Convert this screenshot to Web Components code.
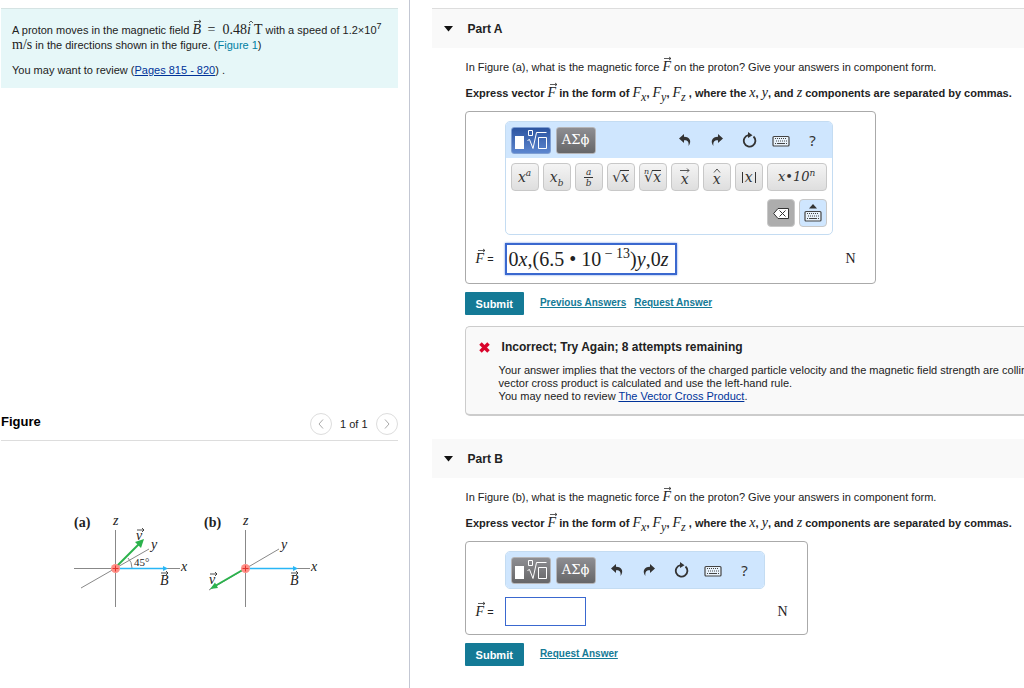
<!DOCTYPE html>
<html lang="en">
<head>
<meta charset="utf-8">
<title>Magnetic force on a proton</title>
<style>
  body {
    margin: 0;
    background: #fff;
    color: #222;
    font: 11px/14px "Liberation Sans", Arial, sans-serif;
    overflow-x: hidden;
  }
  p { margin: 0; }
  a { color: #003399; text-decoration: underline; }
  a.plain { color: #007fa3; text-decoration: none; }
  answer-actions a { color: #147a96; font-weight: bold; font-size: 10px; }
  i, .tex { font-family: "Liberation Serif", "Times New Roman", serif; font-weight: normal; font-size: 14px; line-height: 1; }
  p sup { font-size: 9px; line-height: 0; }
</style>
</head>
<body>
<tutorial-page>
  <problem-intro slot="problem">
    <p>A proton moves in the magnetic field <math-vec>B</math-vec> <span class="tex">&nbsp;=&nbsp; 0.48</span><math-vec accent="hat">i</math-vec> <span class="tex">T</span> with a speed of 1.2×10<sup>7</sup> <span class="tex">m/s</span> in the directions shown in the figure. (<a class="plain" href="#figure">Figure 1</a>)</p>
    <p>You may want to review (<a href="#pages">Pages 815 - 820</a>) .</p>
  </problem-intro>
  <figure-viewer slot="figure" id="figure">
    <proton-diagram></proton-diagram>
  </figure-viewer>

  <part-section heading="Part A">
    <p>In Figure (a), what is the magnetic force <math-vec>F</math-vec> on the proton? Give your answers in component form.</p>
    <p><b>Express vector <math-vec>F</math-vec> in the form of <math-sub sub="x">F</math-sub>, <math-sub sub="y">F</math-sub>, <math-sub sub="z">F</math-sub> , where the <i>x</i>, <i>y</i>, and <i>z</i> components are separated by commas.</b></p>
    <answer-box slot="answer" unit="N" expanded>
      <answer-value>0<em>x</em>,(6.5 • 10<sup>&nbsp;− 13</sup>)<em>y</em>,0<em>z</em></answer-value>
    </answer-box>
    <answer-actions slot="answer">
      <a href="#previous">Previous Answers</a>
      <a href="#request">Request Answer</a>
    </answer-actions>
    <answer-feedback slot="answer" heading="Incorrect; Try Again; 8 attempts remaining">
      Your answer implies that the vectors of the charged particle velocity and the magnetic field strength are collinear<br>
      vector cross product is calculated and use the left-hand rule.<br>
      You may need to review <a href="#cross">The Vector Cross Product</a>.
    </answer-feedback>
  </part-section>

  <part-section heading="Part B">
    <p>In Figure (b), what is the magnetic force <math-vec>F</math-vec> on the proton? Give your answers in component form.</p>
    <p><b>Express vector <math-vec>F</math-vec> in the form of <math-sub sub="x">F</math-sub>, <math-sub sub="y">F</math-sub>, <math-sub sub="z">F</math-sub> , where the <i>x</i>, <i>y</i>, and <i>z</i> components are separated by commas.</b></p>
    <answer-box slot="answer" unit="N"></answer-box>
    <answer-actions slot="answer">
      <a href="#request">Request Answer</a>
    </answer-actions>
  </part-section>
</tutorial-page>

<script>
const SERIF = `"Liberation Serif", "Times New Roman", serif`;

const ICONS = {
  undo: `<svg width="14" height="14" viewBox="0 0 14 14"><path fill="#333" d="M6 1 1 5.5 6 10V7.2C9.5 7 11 8.5 10.6 13 14 8.5 12 3.8 6 3.8Z"/></svg>`,
  redo: `<svg width="14" height="14" viewBox="0 0 14 14"><path fill="#333" d="M8 1 13 5.5 8 10V7.2C4.500 7 3 8.500 3.400 13 0 8.500 2 3.800 8 3.800Z"/></svg>`,
  reset: `<svg width="16" height="16" viewBox="0 0 16 16"><path fill="none" stroke="#333" stroke-width="1.800" d="M12.500 4.500A5.800 5.800 0 1 1 7.500 3.100"/><path fill="#333" d="M7 0 11.500 3.200 7 6Z"/></svg>`,
  keyboard: `<svg width="18" height="14" viewBox="0 0 18 14"><rect x="1" y="3.500" width="16" height="9.500" rx="1" fill="#e8f2fb" stroke="#444" stroke-width="1.200"/><path fill="none" stroke="#444" stroke-dasharray="1 1" d="M3 5.500h12M4 8h11"/><path stroke="#444" d="M3 10.500h1M5 10.500h8M14 10.500h1"/></svg>`,
  collapse: `<svg width="18" height="18" viewBox="0 0 18 18"><path fill="#333" d="M9 0 13 4.500H5Z"/><rect x="1" y="7.500" width="16" height="9.500" rx="1" fill="#e8f2fb" stroke="#444" stroke-width="1.200"/><path fill="none" stroke="#444" stroke-dasharray="1 1" d="M3 9.500h12M4 12h11"/><path stroke="#444" d="M3 14.500h1M5 14.500h8M14 14.500h1"/></svg>`,
  erase: `<svg width="16" height="11" viewBox="0 0 16 11"><path fill="#fff" stroke="#333" d="M5 .5H15.500V10.500H5L.7 5.500Z"/><path stroke="#333" d="M6.500 2.500 12.500 8.500M12.500 2.500 6.500 8.500"/></svg>`,
  template: `<svg width="32" height="22" viewBox="0 0 32 22"><rect x="0" y="7" width="9" height="13" fill="#fff"/><path fill="none" stroke="#fff" d="M13.500 1.500h4v5h-4zM12.500 11.500l2-1 3.500 9 3.500-16h10M23.500 8.500h8v11h-8z"/></svg>`,
};

/**
 * Base: opens the shadow root and stamps the html getter into it.
 */
class BaseElement extends HTMLElement {
  constructor() {
    super();
    this.attachShadow({ mode: "open" });
  }
  connectedCallback() {
    this.render();
  }
  render() {
    const template = document.createElement("template");
    template.innerHTML = this.html;
    this.shadowRoot.replaceChildren(template.content.cloneNode(true));
  }
}

/**
 * `tutorial-page`
 * Problem and figure on the left, parts on the right.
 */
class TutorialPage extends BaseElement {
  static get tag() {
    return "tutorial-page";
  }
  get html() {
    return `
    <style>
      :host {
        display: grid;
        grid-template-columns: 2fr 3fr;
        min-height: 100vh;
      }
      aside {
        display: grid;
        grid-template-rows: 3fr 2fr;
        box-sizing: border-box;
        height: 100vh;
        min-width: 0;
        padding: 0 11px 0 1px;
        border-right: 1px solid #c3c7d3;
      }
      main {
        display: flex;
        flex-direction: column;
        gap: 23px;
        min-width: 0;
        padding: 8px 0 0 22px;
      }
    </style>
    <aside>
      <slot name="problem"></slot>
      <slot name="figure"></slot>
    </aside>
    <main><slot></slot></main>`;
  }
}

/**
 * `math-vec`
 * Italic symbol with an arrow or a hat above it.
 */
class MathVec extends BaseElement {
  static get tag() {
    return "math-vec";
  }
  get html() {
    const mark =
      this.getAttribute("accent") === "hat"
        ? "M1 4 3 2 5 4"
        : "M1 2.500H8M6 1 8 2.500 6 4";
    return `
    <style>
      :host {
        display: inline-block;
        position: relative;
        font: italic 14px/14px ${SERIF};
      }
      svg { position: absolute; top: -4px; left: 1px; }
    </style>
    <slot></slot><svg width="9" height="6" viewBox="0 0 9 6" aria-hidden="true"><path d="${mark}" fill="none" stroke="#333" stroke-width=".8"/></svg>`;
  }
}

/**
 * `math-sub`
 * Italic symbol with a subscript.
 */
class MathSub extends BaseElement {
  static get tag() {
    return "math-sub";
  }
  get html() {
    return `
    <style>
      :host { font: italic 14px/1 ${SERIF}; }
      sub { font-size: 12px; line-height: 0; }
    </style><slot></slot><sub>${this.getAttribute("sub")}</sub>`;
  }
}

class ProblemIntro extends BaseElement {
  static get tag() {
    return "problem-intro";
  }
  get html() {
    return `
    <style>
      :host { display: block; min-width: 0; padding-top: 8px; }
      section {
        display: flex;
        flex-direction: column;
        gap: 10px;
        padding: 14px 11px 10px;
        border-top: 1px solid #d5e3e3;
        background: #e6f7f8;
        line-height: 15px;
      }
    </style>
    <section><slot></slot></section>`;
  }
}

/**
 * `figure-viewer`
 * Title bar with pager, figure below.
 */
class FigureViewer extends BaseElement {
  static get tag() {
    return "figure-viewer";
  }
  get html() {
    return `
    <style>
      :host { display: block; min-width: 0; }
      header {
        display: flex;
        align-items: center;
        gap: 8px;
        padding-bottom: 5px;
        border-bottom: 1px solid #ddd;
      }
      h2 { flex: 1; align-self: start; margin: 0; color: #000; font-size: 13px; line-height: 18px; }
      button {
        display: grid;
        place-items: center;
        width: 22px;
        height: 22px;
        padding: 0;
        border: 1px solid #ddd;
        border-radius: 50%;
        background: #fff;
      }
      .body { padding: 72px 0 0 71px; }
    </style>
    <header>
      <h2>Figure</h2>
      <button type="button" aria-label="Previous figure"><svg width="8" height="12" viewBox="0 0 8 12"><path d="M6 1.500 2 6l4 4.500" fill="none" stroke="#aaa"/></svg></button>
      <span>1 of 1</span>
      <button type="button" aria-label="Next figure"><svg width="8" height="12" viewBox="0 0 8 12"><path d="M2 1.500 6 6l-4 4.500" fill="none" stroke="#aaa"/></svg></button>
    </header>
    <div class="body"><slot></slot></div>`;
  }
}

/**
 * `proton-diagram`
 * Axes, field and velocity vectors for cases (a) and (b).
 */
class ProtonDiagram extends BaseElement {
  static get tag() {
    return "proton-diagram";
  }
  proton(x, y) {
    return `
      <circle cx="${x}" cy="${y}" r="4.500" fill="#ff8f87"/>
      <path d="M${x - 3} ${y}h6M${x} ${y - 3}v6" stroke="#e0322c"/>`;
  }
  // letter with a small arrow above
  vector(x, y, letter, rise) {
    return `
      <text x="${x}" y="${y}">${letter}</text>
      <path d="M${x + 1} ${y - rise}h7M${x + 6} ${y - rise - 2}l2 2-2 2" class="mark"/>`;
  }
  get html() {
    return `
    <style>
      :host { display: block; }
      svg { display: block; }
      text { font: italic 14px ${SERIF}; fill: #222; }
      .case { font: bold 14px ${SERIF}; }
      .angle { font: 11px ${SERIF}; }
      .axis { stroke: #888; fill: none; }
      .mark { stroke: #222; fill: none; stroke-width: .8; }
      .v { stroke: #2bb24c; stroke-width: 2; }
      .b { stroke: #29b6f6; stroke-width: 1.500; }
    </style>
    <svg width="254" height="100" viewBox="0 0 254 100" role="img" aria-label="Proton velocity and magnetic field in two cases">
      <text class="case" x="2" y="14">(a)</text>
      <text x="41" y="12">z</text>
      <path class="axis" d="M43.500 17V94M2 55.500H108M9 75 77 36"/>
      <path class="axis" d="M56 45Q60 49 60 55"/>
      <path class="v" d="M43 55 68 30"/>
      <path fill="#2bb24c" d="M72 26 63 29 69 35Z"/>
      <path class="b" d="M43 55.500H91"/>
      <path fill="#29b6f6" d="M96 55.500 91 53V58Z"/>
      ${this.vector(64, 27, "v", 10)}
      <text x="79" y="36">y</text>
      <text x="109" y="58">x</text>
      <text class="angle" x="62" y="53">45°</text>
      ${this.vector(88, 72, "B", 12)}
      ${this.proton(43.5, 55.5)}

      <text class="case" x="132" y="14">(b)</text>
      <text x="171" y="12">z</text>
      <path class="axis" d="M173.500 17V94M174 55.500H238M137 77 207 36"/>
      <path class="v" d="M174 55 143 73"/>
      <path fill="#2bb24c" d="M138 76 143 69.500 146 75Z"/>
      <path class="b" d="M174 55.500H221"/>
      <path fill="#29b6f6" d="M226 55.500 221 53V58Z"/>
      ${this.vector(137, 71, "v", 10)}
      <text x="209" y="36">y</text>
      <text x="239" y="58">x</text>
      ${this.vector(218, 72, "B", 12)}
      ${this.proton(173.5, 55.5)}
    </svg>`;
  }
}

class PartSection extends BaseElement {
  static get tag() {
    return "part-section";
  }
  get html() {
    return `
    <style>
      :host { display: block; }
      :host(:first-of-type) header { border-top: 1px solid #ddd; }
      header { background: #f9f9f9; }
      h2 { margin: 0; }
      button {
        display: flex;
        align-items: center;
        gap: 15px;
        width: 100%;
        height: 39px;
        padding: 0 12px;
        border: 0;
        background: none;
        color: #222;
        font: bold 12px/16px "Liberation Sans", Arial, sans-serif;
      }
      .question {
        display: flex;
        flex-direction: column;
        gap: 12px;
        padding: 12px 0 11px 34px;
      }
      .answer { padding-left: 33px; }
    </style>
    <header>
      <h2><button type="button" aria-expanded="true"><svg width="9" height="6" viewBox="0 0 9 6"><path d="M0 0H9L4.500 5.500Z" fill="#111"/></svg>${this.getAttribute("heading")}</button></h2>
    </header>
    <div class="question"><slot></slot></div>
    <div class="answer"><slot name="answer"></slot></div>`;
  }
}

/**
 * `math-toolbar`
 * Equation editor bar, `expanded` adds the template keys.
 */
class MathToolbar extends BaseElement {
  static get tag() {
    return "math-toolbar";
  }
  get keys() {
    return `
    <div class="keys">
      <button type="button"><span>x<sup>a</sup></span></button>
      <button type="button"><span>x<sub>b</sub></span></button>
      <button type="button"><span class="frac"><span>a</span><span>b</span></span></button>
      <button type="button"><span class="root">x</span></button>
      <button type="button"><small>n</small><span class="root">x</span></button>
      <button type="button"><span class="over"><svg width="10" height="5" viewBox="0 0 10 5"><path d="M0 2.500H9M7 .5 9 2.500 7 4.500" fill="none" stroke="#555"/></svg>x</span></button>
      <button type="button"><span class="over"><svg width="10" height="5" viewBox="0 0 10 5"><path d="M2 4.500 5 1 8 4.500" fill="none" stroke="#555"/></svg>x</span></button>
      <button type="button"><span class="abs">x</span></button>
      <button type="button" class="wide"><span>x•10<sup>n</sup></span></button>
    </div>
    <div class="keys end">
      <button type="button" class="erase" aria-label="Delete">${ICONS.erase}</button>
      <button type="button" class="fold" aria-label="Hide keyboard">${ICONS.collapse}</button>
    </div>`;
  }
  get html() {
    const expanded = this.hasAttribute("expanded");
    return `
    <style>
      :host {
        display: block;
        box-sizing: border-box;
        border: 1px solid #c4dcf2;
        border-radius: 5px;
        background: #fff;
        overflow: hidden;
      }
      button { padding: 0; border: 0; background: none; color: #333; }
      .bar {
        display: flex;
        align-items: center;
        gap: 5px;
        height: 36px;
        padding: 0 3px 0 5px;
        background: #cfe6fe;
      }
      .mode {
        display: grid;
        place-items: center;
        width: 40px;
        height: 27px;
        border: 1px solid #b5b5b8;
        border-radius: 3px;
        background: linear-gradient(#8e8e92, #666668);
        color: #fff;
        font: 13px/16px "DejaVu Serif", serif;
      }
      .mode.on { border-color: #7f9fd3; background: linear-gradient(#2c54a0, #5c86cf); }
      .tools { display: flex; margin-left: auto; }
      .tools button {
        display: grid;
        place-items: center;
        width: 32px;
        height: 28px;
        font: 15px/18px "Noto Sans", sans-serif;
      }
      .keys { display: flex; gap: 4px; padding: 5px 5px 8px; }
      .keys.end { justify-content: flex-end; padding: 0 5px 7px; }
      .keys button {
        display: flex;
        align-items: center;
        justify-content: center;
        box-sizing: border-box;
        width: 28px;
        height: 28px;
        border: 1px solid #c8c8c8;
        border-radius: 4px;
        background: linear-gradient(#f4f4f4, #dedede);
        font: italic 14px/18px "DejaVu Serif", serif;
      }
      .keys .wide { width: 60px; font-size: 13px; }
      .keys .erase { background: #adadad; }
      .keys .fold { background: #cfe6fe; }
      sup, sub { font-size: 9px; line-height: 0; }
      .frac { display: grid; font-size: 9px; line-height: 10px; text-align: center; }
      .frac span:first-child { border-bottom: 1px solid #333; }
      .frac span { padding: 0 2px; }
      .root { display: flex; line-height: 15px; }
      .root::before { content: "√"; font: 14px/15px "DejaVu Sans", sans-serif; }
      .root { background: linear-gradient(#333, #333) no-repeat 8px 0 / 100% 1px; }
      small { align-self: flex-start; margin: 2px -5px 0 0; font-size: 8px; line-height: 12px; }
      .over { display: grid; justify-items: center; line-height: 13px; }
      .abs { padding: 0 2px; border: solid #333; border-width: 0 1px; line-height: 11px; }
    </style>
    <div class="bar">
      <button type="button" class="mode ${expanded ? "on" : ""}" aria-label="Templates">${ICONS.template}</button>
      <button type="button" class="mode" aria-label="Symbols">ΑΣϕ</button>
      <div class="tools">
        <button type="button" aria-label="Undo">${ICONS.undo}</button>
        <button type="button" aria-label="Redo">${ICONS.redo}</button>
        <button type="button" aria-label="Reset">${ICONS.reset}</button>
        <button type="button" aria-label="Keyboard shortcuts">${ICONS.keyboard}</button>
        <button type="button" aria-label="Help">?</button>
      </div>
    </div>
    ${expanded ? this.keys : ""}`;
  }
}

/**
 * `answer-value`
 * Typeset form of what was typed into the answer field.
 */
class AnswerValue extends BaseElement {
  static get tag() {
    return "answer-value";
  }
  get html() {
    return `
    <style>
      :host { display: block; font: 20px/28px ${SERIF}; white-space: nowrap; }
      ::slotted(sup) { font-size: 14px; line-height: 0; }
    </style>
    <slot></slot>`;
  }
}

/**
 * `answer-box`
 * Toolbar, label, input and unit.
 */
class AnswerBox extends BaseElement {
  static get tag() {
    return "answer-box";
  }
  get html() {
    const expanded = this.hasAttribute("expanded");
    return `
    <style>
      :host {
        display: grid;
        grid-template-columns: 29px auto 20px;
        gap: 8px 10px;
        align-items: center;
        box-sizing: border-box;
        width: fit-content;
        padding: 9px 12px 8px 0;
        border: 1px solid #aaa;
        border-radius: 4px;
      }
      math-toolbar { grid-column: 2; grid-row: 1; }
      label { grid-column: 1; grid-row: 2; padding-left: 10px; white-space: nowrap; }
      .field { display: grid; grid-column: 2; grid-row: 2; justify-self: start; }
      /* the typeset value sits on top of the input it belongs to */
      .field > * { grid-area: 1 / 1; }
      .value { z-index: 1; padding: 2px 9px 2px 4px; pointer-events: none; }
      input {
        box-sizing: border-box;
        width: 100%;
        min-width: 81px;
        height: 29px;
        margin: 0;
        padding: 0 4px;
        border: 1px solid #3a68cf;
        outline: 0;
        background: #fff;
        font: 20px ${SERIF};
      }
      :host([expanded]) input { height: 32px; border-width: 2px; box-shadow: 0 0 2px #6f95e6; }
      .unit { grid-column: 3; grid-row: 2; padding-left: 3px; font: 14px/16px ${SERIF}; }
    </style>
    <math-toolbar ${expanded ? "expanded" : ""}></math-toolbar>
    <label for="answer"><math-vec>F</math-vec> =</label>
    <div class="field">
      <input id="answer" type="text" size="1" autocomplete="off">
      ${expanded ? `<div class="value"><slot></slot></div>` : ""}
    </div>
    <span class="unit">${this.getAttribute("unit")}</span>`;
  }
}

class AnswerActions extends BaseElement {
  static get tag() {
    return "answer-actions";
  }
  get html() {
    return `
    <style>
      :host { display: flex; align-items: center; gap: 8px; margin-top: 8px; }
      button {
        height: 23px;
        margin-right: 8px;
        padding: 0 11px;
        border: 0;
        border-radius: 1px;
        background: #147a96;
        color: #fff;
        font: bold 11px/14px "Liberation Sans", Arial, sans-serif;
      }
      ::slotted(a) { padding-bottom: 2px; }
    </style>
    <button type="button">Submit</button>
    <slot></slot>`;
  }
}

class AnswerFeedback extends BaseElement {
  static get tag() {
    return "answer-feedback";
  }
  get html() {
    return `
    <style>
      :host {
        display: block;
        margin-top: 11px;
        padding: 12px 0 11px 13px;
        border: solid #ccc;
        border-width: 1px 0 2px 1px;
        border-radius: 5px 0 0 5px;
        background: #f9f9f9;
        overflow: hidden;
      }
      h3 {
        display: flex;
        align-items: center;
        gap: 12px;
        margin: 0 0 9px;
        font-size: 12px;
        line-height: 16px;
      }
      p { margin: 0; padding-left: 20px; line-height: 13px; white-space: nowrap; }
    </style>
    <h3><svg width="11" height="11" viewBox="0 0 11 11" aria-hidden="true"><path d="M1.500 1.500l8 8M9.500 1.500l-8 8" stroke="#d9042b" stroke-width="3.500"/></svg>${this.getAttribute("heading")}</h3>
    <p><slot></slot></p>`;
  }
}

[
  MathVec,
  MathSub,
  ProblemIntro,
  ProtonDiagram,
  FigureViewer,
  MathToolbar,
  AnswerValue,
  AnswerBox,
  AnswerActions,
  AnswerFeedback,
  PartSection,
  TutorialPage,
].forEach((element) => customElements.define(element.tag, element));
</script>
</body>
</html>
